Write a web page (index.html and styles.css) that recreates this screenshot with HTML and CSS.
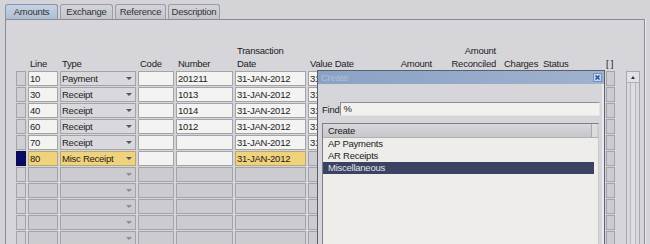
FILE: index.html
```html
<!DOCTYPE html>
<html lang="en">
<head>
    <meta charset="UTF-8">
    <meta name="viewport" content="width=device-width, initial-scale=1.0">
    <title>Bank Statement Lines</title>
    <link rel="stylesheet" href="styles.css">
</head>
<body>
    <div class="tabs">
        <div class="tab active t1">Amounts</div>
        <div class="tab t2">Exchange</div>
        <div class="tab t3">Reference</div>
        <div class="tab t4">Description</div>
    </div>

    <div class="panel">
        <div class="block">
            <div class="lines">
                <div class="row head">
                    <div></div>
                    <div>Line</div>
                    <div>Type</div>
                    <div>Code</div>
                    <div>Number</div>
                    <div>Transaction<br>Date</div>
                    <div>Value Date</div>
                    <div class="num">Amount</div>
                    <div class="num">Amount<br>Reconciled</div>
                    <div>Charges</div>
                    <div>Status</div>
                    <div class="chk-head">[ ]</div>
                </div>

                <div class="row">
                    <div class="cell ind"></div>
                    <div class="cell edit">10</div>
                    <div class="cell pop">Payment<span class="arrow"></span></div>
                    <div class="cell edit"></div>
                    <div class="cell edit">201211</div>
                    <div class="cell edit">31-JAN-2012</div>
                    <div class="cell edit">31</div>
                    <div class="cell edit"></div>
                    <div class="cell edit"></div>
                    <div class="cell edit"></div>
                    <div class="cell"></div>
                    <div class="cell"></div>
                </div>
                <div class="row">
                    <div class="cell ind"></div>
                    <div class="cell edit">30</div>
                    <div class="cell pop">Receipt<span class="arrow"></span></div>
                    <div class="cell edit"></div>
                    <div class="cell edit">1013</div>
                    <div class="cell edit">31-JAN-2012</div>
                    <div class="cell edit">31</div>
                    <div class="cell edit"></div>
                    <div class="cell edit"></div>
                    <div class="cell edit"></div>
                    <div class="cell"></div>
                    <div class="cell"></div>
                </div>
                <div class="row">
                    <div class="cell ind"></div>
                    <div class="cell edit">40</div>
                    <div class="cell pop">Receipt<span class="arrow"></span></div>
                    <div class="cell edit"></div>
                    <div class="cell edit">1014</div>
                    <div class="cell edit">31-JAN-2012</div>
                    <div class="cell edit">31</div>
                    <div class="cell edit"></div>
                    <div class="cell edit"></div>
                    <div class="cell edit"></div>
                    <div class="cell"></div>
                    <div class="cell"></div>
                </div>
                <div class="row">
                    <div class="cell ind"></div>
                    <div class="cell edit">60</div>
                    <div class="cell pop">Receipt<span class="arrow"></span></div>
                    <div class="cell edit"></div>
                    <div class="cell edit">1012</div>
                    <div class="cell edit">31-JAN-2012</div>
                    <div class="cell edit">31</div>
                    <div class="cell edit"></div>
                    <div class="cell edit"></div>
                    <div class="cell edit"></div>
                    <div class="cell"></div>
                    <div class="cell"></div>
                </div>
                <div class="row">
                    <div class="cell ind"></div>
                    <div class="cell edit">70</div>
                    <div class="cell pop">Receipt<span class="arrow"></span></div>
                    <div class="cell edit"></div>
                    <div class="cell edit"></div>
                    <div class="cell edit">31-JAN-2012</div>
                    <div class="cell edit">31</div>
                    <div class="cell edit"></div>
                    <div class="cell edit"></div>
                    <div class="cell edit"></div>
                    <div class="cell"></div>
                    <div class="cell"></div>
                </div>
                <div class="row">
                    <div class="cell ind current"></div>
                    <div class="cell hot">80</div>
                    <div class="cell pop hot">Misc Receipt<span class="arrow"></span></div>
                    <div class="cell edit"></div>
                    <div class="cell edit"></div>
                    <div class="cell hot">31-JAN-2012</div>
                    <div class="cell"></div>
                    <div class="cell"></div>
                    <div class="cell"></div>
                    <div class="cell"></div>
                    <div class="cell"></div>
                    <div class="cell"></div>
                </div>

                <div class="row empty">
                    <div class="cell ind"></div><div class="cell"></div>
                    <div class="cell pop"><span class="arrow"></span></div>
                    <div class="cell"></div><div class="cell"></div><div class="cell"></div>
                    <div class="cell"></div><div class="cell"></div><div class="cell"></div>
                    <div class="cell"></div><div class="cell"></div><div class="cell"></div>
                </div>
                <div class="row empty">
                    <div class="cell ind"></div><div class="cell"></div>
                    <div class="cell pop"><span class="arrow"></span></div>
                    <div class="cell"></div><div class="cell"></div><div class="cell"></div>
                    <div class="cell"></div><div class="cell"></div><div class="cell"></div>
                    <div class="cell"></div><div class="cell"></div><div class="cell"></div>
                </div>
                <div class="row empty">
                    <div class="cell ind"></div><div class="cell"></div>
                    <div class="cell pop"><span class="arrow"></span></div>
                    <div class="cell"></div><div class="cell"></div><div class="cell"></div>
                    <div class="cell"></div><div class="cell"></div><div class="cell"></div>
                    <div class="cell"></div><div class="cell"></div><div class="cell"></div>
                </div>
                <div class="row empty">
                    <div class="cell ind"></div><div class="cell"></div>
                    <div class="cell pop"><span class="arrow"></span></div>
                    <div class="cell"></div><div class="cell"></div><div class="cell"></div>
                    <div class="cell"></div><div class="cell"></div><div class="cell"></div>
                    <div class="cell"></div><div class="cell"></div><div class="cell"></div>
                </div>
                <div class="row empty">
                    <div class="cell ind"></div><div class="cell"></div>
                    <div class="cell pop"><span class="arrow"></span></div>
                    <div class="cell"></div><div class="cell"></div><div class="cell"></div>
                    <div class="cell"></div><div class="cell"></div><div class="cell"></div>
                    <div class="cell"></div><div class="cell"></div><div class="cell"></div>
                </div>
            </div>

            <div class="scrollbar">
                <div class="scroll-up"><span class="up-arrow"></span></div>
                <div class="scroll-track"></div>
            </div>
        </div>

        <!-- LOV window on top of the lines -->
        <div class="dialog">
            <div class="dialog-title">
                <span class="dialog-name">Create</span>
                <svg class="close" width="9" height="9" viewBox="0 0 9 9">
                    <rect x="0.5" y="0.5" width="8" height="8" fill="#c3d5ee" stroke="#7191c2"/>
                    <path d="M2.5 2.5 L6.5 6.5 M6.5 2.5 L2.5 6.5" stroke="#24478c" stroke-width="1.4"/>
                </svg>
            </div>
            <div class="dialog-body">
                <div class="find">
                    <span class="find-label">Find</span>
                    <div class="find-input">%</div>
                </div>
                <div class="list">
                    <div class="list-head">
                        <span>Create</span>
                        <span class="list-head-end"></span>
                    </div>
                    <div class="list-item">AP Payments</div>
                    <div class="list-item">AR Receipts</div>
                    <div class="list-item selected">Miscellaneous</div>
                </div>
            </div>
        </div>
    </div>
</body>
</html>
```

FILE: styles.css
```css
html, body{
    margin: 0;
    height: 100%;
    overflow: hidden;
}

body{
    background-color: #d4d4d8;
    font-family: "Liberation Sans", Arial, sans-serif;
    font-size: 9.5px;
    letter-spacing: -0.25px;
    color: #1c1c1c;
}

.tabs{
    display: flex;
    gap: 2px;
    padding: 4px 0 0 5px;
    height: 15px;
}

.tab{
    height: 14px;
    line-height: 14px;
    text-align: center;
    border: 1px solid #9c9ca6;
    border-bottom: none;
    border-radius: 3px 3px 0 0;
    background: linear-gradient(#d4d5da, #c3c4ca);
    color: #333;
}

.tab.active{
    background: linear-gradient(#c6d3e3, #adbed3);
    border-color: #8794ab;
}

.t1{ width: 51px; }
.t2{ width: 51px; }
.t3{ width: 49px; }
.t4{ width: 50px; }

.panel{
    position: relative;
    margin-left: 5px;
    width: 638px;
    height: 225px;
    border: 1px solid #8a8a94;
    border-bottom: none;
    background-color: #d6d6da;
    box-shadow: 1px 0 #ececf0;
    overflow: hidden;
}

.block{
    display: flex;
    align-items: flex-start;
    padding: 24px 0 0 10px;
}

.lines{
    display: flex;
    flex-direction: column;
    gap: 1px;
}

.row{
    display: grid;
    grid-template-columns: 10px 30px 76px 36px 57px 71px 72px 54px 62px 37px 63px 9px;
    column-gap: 2px;
}

.head{
    height: 26px;
    align-items: end;
    line-height: 12.5px;
    white-space: nowrap;
}

.head div{
    padding-left: 2px;
}

.head .num{
    text-align: right;
    padding-right: 4px;
}

.head .chk-head{
    padding-left: 0;
}

.cell{
    box-sizing: border-box;
    height: 15px;
    line-height: 13px;
    padding-left: 1px;
    border: 1px solid #a3a3ab;
    background-color: #cbcbd0;
    white-space: nowrap;
    overflow: hidden;
}

.edit{
    background-color: #f3f3f1;
}

.pop{
    display: flex;
    justify-content: space-between;
    align-items: center;
    padding-right: 3px;
    background-color: #d9d9dd;
}

.arrow{
    width: 0;
    height: 0;
    border-left: 3px solid transparent;
    border-right: 3px solid transparent;
    border-top: 3px solid #55555c;
}

.empty .pop{
    justify-content: flex-end;
    background-color: #cbcbd0;
}

.empty .arrow{
    border-top-color: #8e8e96;
}

.ind{
    background-color: #cfcfd4;
}

.ind.current{
    background-color: #0b0b66;
    border-color: #0b0b4a;
}

.hot{
    background-color: #f1d27c;
    border-color: #b8a878;
}

.scrollbar{
    box-sizing: border-box;
    margin: 27px 0 0 11px;
    width: 14px;
    height: 180px;
    border: 1px solid #a8a8b0;
    background-color: #d9d9dd;
}

.scroll-up{
    height: 10px;
    display: flex;
    justify-content: center;
    align-items: center;
    border-bottom: 1px solid #b0b0b8;
    background-color: #e2e2e6;
}

.up-arrow{
    width: 0;
    height: 0;
    border-left: 2.5px solid transparent;
    border-right: 2.5px solid transparent;
    border-bottom: 3px solid #303038;
}

.scroll-track{
    margin: 0 3px;
    height: 170px;
    border-left: 1px solid #b8b8c0;
    border-right: 1px solid #b8b8c0;
    background-color: #dedee2;
}

.dialog{
    position: absolute;
    left: 311px;
    top: 50px;
    width: 286px;
    height: 190px;
    border: 1px solid #5e5e6a;
    border-bottom: none;
    background-color: #d6d6da;
    box-shadow: inset -2px 0 #ececf0;
}

.dialog-title{
    height: 13px;
    display: flex;
    justify-content: space-between;
    align-items: center;
    padding: 0 2px 0 3px;
    background: linear-gradient(90deg, #8aa2c5, #9fb2ce);
}

.dialog-name{
    color: #aec0d9;
}

.dialog-body{
    padding: 18px 4px 0 4px;
}

.find{
    display: flex;
    align-items: center;
}

.find-label{
    margin-right: 1px;
}

.find-input{
    flex: 1;
    box-sizing: border-box;
    height: 14px;
    line-height: 12px;
    padding-left: 2px;
    border: 1px solid #8e8e96;
    border-right-color: #e4e4e8;
    border-bottom-color: #e4e4e8;
    background-color: #f3f1ed;
}

.list{
    margin: 7px 1px 0 0;
    height: 130px;
    border: 1px solid #7e7e88;
    border-right-color: #c8c8ce;
    background-color: #efede9;
}

.list-head{
    display: flex;
    justify-content: space-between;
    height: 13px;
    line-height: 13px;
    padding-left: 5px;
    border-bottom: 1px solid #b0b0b8;
    background: linear-gradient(#d8d8dc, #c6c6cb);
}

.list-head-end{
    width: 5px;
    margin-right: 1px;
    border-left: 1px solid #a8a8b0;
    background-color: #dcdce0;
}

.list-item{
    height: 12px;
    line-height: 12px;
    padding-left: 5px;
    margin-right: 4px;
}

.list-item.selected{
    background-color: #3b4363;
    color: #e4e4ec;
}
```
